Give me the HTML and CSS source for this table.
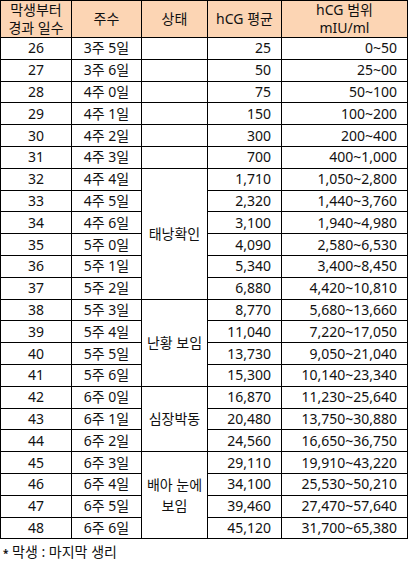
FILE: index.html
```html
<!DOCTYPE html>
<html lang="ko">
<head>
<meta charset="utf-8">
<link rel="stylesheet" href="styles.css">
</head>
<body>
<table class="hcg">
  <colgroup>
    <col class="c1"><col class="c2"><col class="c3"><col class="c4"><col class="c5">
  </colgroup>
  <thead>
    <tr class="head">
      <th>막생부터<br>경과 일수</th>
      <th>주수</th>
      <th>상태</th>
      <th>hCG 평균</th>
      <th>hCG 범위<br>mIU/ml</th>
    </tr>
  </thead>
  <tbody>
    <tr><td>26</td><td class="wk">3주 5일</td><td></td><td class="num">25</td><td class="num">0~50</td></tr>
    <tr><td>27</td><td class="wk">3주 6일</td><td></td><td class="num">50</td><td class="num">25~00</td></tr>
    <tr><td>28</td><td class="wk">4주 0일</td><td></td><td class="num">75</td><td class="num">50~100</td></tr>
    <tr><td>29</td><td class="wk">4주 1일</td><td></td><td class="num">150</td><td class="num">100~200</td></tr>
    <tr><td>30</td><td class="wk">4주 2일</td><td></td><td class="num">300</td><td class="num">200~400</td></tr>
    <tr><td>31</td><td class="wk">4주 3일</td><td></td><td class="num">700</td><td class="num">400~1,000</td></tr>
    <tr><td>32</td><td class="wk">4주 4일</td><td class="st" rowspan="6">태낭확인</td><td class="num">1,710</td><td class="num">1,050~2,800</td></tr>
    <tr><td>33</td><td class="wk">4주 5일</td><td class="num">2,320</td><td class="num">1,440~3,760</td></tr>
    <tr><td>34</td><td class="wk">4주 6일</td><td class="num">3,100</td><td class="num">1,940~4,980</td></tr>
    <tr><td>35</td><td class="wk">5주 0일</td><td class="num">4,090</td><td class="num">2,580~6,530</td></tr>
    <tr><td>36</td><td class="wk">5주 1일</td><td class="num">5,340</td><td class="num">3,400~8,450</td></tr>
    <tr><td>37</td><td class="wk">5주 2일</td><td class="num">6,880</td><td class="num">4,420~10,810</td></tr>
    <tr><td>38</td><td class="wk">5주 3일</td><td class="st" rowspan="4">난황 보임</td><td class="num">8,770</td><td class="num">5,680~13,660</td></tr>
    <tr><td>39</td><td class="wk">5주 4일</td><td class="num">11,040</td><td class="num">7,220~17,050</td></tr>
    <tr><td>40</td><td class="wk">5주 5일</td><td class="num">13,730</td><td class="num">9,050~21,040</td></tr>
    <tr><td>41</td><td class="wk">5주 6일</td><td class="num">15,300</td><td class="num">10,140~23,340</td></tr>
    <tr><td>42</td><td class="wk">6주 0일</td><td class="st" rowspan="3">심장박동</td><td class="num">16,870</td><td class="num">11,230~25,640</td></tr>
    <tr><td>43</td><td class="wk">6주 1일</td><td class="num">20,480</td><td class="num">13,750~30,880</td></tr>
    <tr><td>44</td><td class="wk">6주 2일</td><td class="num">24,560</td><td class="num">16,650~36,750</td></tr>
    <tr><td>45</td><td class="wk">6주 3일</td><td class="st" rowspan="4">배아 눈에<br>보임</td><td class="num">29,110</td><td class="num">19,910~43,220</td></tr>
    <tr><td>46</td><td class="wk">6주 4일</td><td class="num">34,100</td><td class="num">25,530~50,210</td></tr>
    <tr><td>47</td><td class="wk">6주 5일</td><td class="num">39,460</td><td class="num">27,470~57,640</td></tr>
    <tr><td>48</td><td class="wk">6주 6일</td><td class="num">45,120</td><td class="num">31,700~65,380</td></tr>
  </tbody>
</table>
<p class="note"><span class="ast">*</span> 막생 : 마지막 생리</p>
</body>
</html>
```

FILE: styles.css
```css
html, body {
  margin: 0;
  padding: 0;
  background: #ffffff;
}
body {
  font-family: "Noto Sans", "Noto Sans CJK KR", sans-serif;
  font-size: 14px;
  color: #111111;
}
.hcg {
  border-collapse: collapse;
  table-layout: fixed;
  width: 407px;
  margin: 0;
}
.c1 { width: 71px; }
.c2 { width: 70px; }
.c3 { width: 66px; }
.c4 { width: 74px; }
.c5 { width: 126px; }
.hcg th, .hcg td {
  border: 1px solid #000000;
  padding: 0 3px;
  text-align: center;
  vertical-align: middle;
  font-weight: normal;
  white-space: nowrap;
  line-height: 16px;
}
.hcg th {
  background: #fcd5b4;
  line-height: 18px;
  padding-top: 0;
  padding-bottom: 0;
}
.head { height: 37px; }
.hcg tbody tr { height: 21.8px; }
.hcg td.num {
  text-align: right;
  padding-right: 10px;
}
.hcg td.st {
  line-height: 21px;
}
.note {
  margin: 4px 0 0 3px;
  font-size: 14px;
  line-height: 18px;
}
.ast {
  font-size: 10px;
  font-weight: bold;
}
```
